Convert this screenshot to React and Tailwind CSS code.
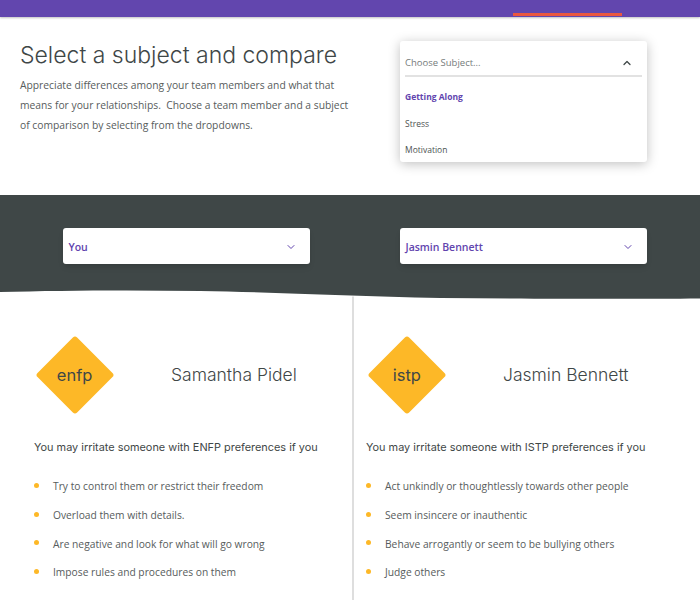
import { ChevronDown, ChevronUp } from "lucide-react";

const people = [
  {
    type: "enfp",
    name: "Samantha Pidel",
    intro: "You may irritate someone with ENFP preferences if you",
    items: [
      "Try to control them or restrict their freedom",
      "Overload them with details.",
      "Are negative and look for what will go wrong",
      "Impose rules and procedures on them",
    ],
  },
  {
    type: "istp",
    name: "Jasmin Bennett",
    intro: "You may irritate someone with ISTP preferences if you",
    items: [
      "Act unkindly or thoughtlessly towards other people",
      "Seem insincere or inauthentic",
      "Behave arrogantly or seem to be bullying others",
      "Judge others",
    ],
  },
];

function PersonSelect({ label }) {
  return (
    <div className="flex h-9 w-[247px] items-center justify-between rounded-[3px] bg-white pl-[5.5px] pr-[13px] shadow-md">
      <span className="pt-[3px] text-[10.5px] font-semibold text-[#6144ae]">{label}</span>
      <ChevronDown className="mt-[2px] h-3 w-3 text-[#6144ae]" strokeWidth={2} />
    </div>
  );
}

function PersonColumn({ person, className }) {
  return (
    <div className={className}>
      <div className="flex h-[80px] items-center">
        <div className="ml-px flex h-[80px] w-[80px] shrink-0 items-center justify-center">
          <div className="flex h-[56px] w-[56px] rotate-45 items-center justify-center rounded-[3px] bg-[#fdb827]">
            <span className="-rotate-45 font-['Inter',sans-serif] text-[16.5px] text-[#3f4747]">{person.type}</span>
          </div>
        </div>
        <div className="ml-[56px] pt-px font-['Inter',sans-serif] text-[17.5px] font-light text-[#3f4747]">{person.name}</div>
      </div>
      <p className="mt-[22px] font-['Inter',sans-serif] text-[10.9px] leading-[20px] text-[#3f4747]">{person.intro}</p>
      <ul className="mt-[20px] flex flex-col gap-[8.7px]">
        {person.items.map((item) => (
          <li key={item} className="flex h-5 items-center text-[10.25px] text-[#575c5c]">
            <span className="mb-[3px] mr-[14px] h-[5px] w-[5px] shrink-0 rounded-full bg-[#fdb827]" />
            {item}
          </li>
        ))}
      </ul>
    </div>
  );
}

export default function App() {
  return (
    <div className="h-[600px] w-[700px] overflow-hidden bg-white font-['Open_Sans',sans-serif]">
      {/* Nav */}
      <header className="flex h-[17px] justify-end bg-[#6246ae] pr-[78px] shadow-[0_1px_2px_rgba(0,0,0,0.25)]">
        <div className="mt-[13px] h-[3px] w-[109px] bg-[#e9573f]" />
      </header>

      {/* Intro */}
      <section className="flex h-[178px] justify-between pl-5 pr-[53px]">
        <div className="w-[340px] pt-[23px]">
          <h1 className="font-['Inter',sans-serif] text-[23px] font-light leading-[30px] text-[#3f4747]">
            Select a subject and compare
          </h1>
          <p className="mt-[6px] whitespace-pre-wrap text-[10.3px] leading-[19.8px] text-[#575c5c]">
            Appreciate differences among your team members and what that means for your relationships.  Choose a team member and a subject of comparison by selecting from the dropdowns.
          </p>
        </div>
        <div className="mt-6 h-[121px] w-[247px] rounded-[3px] bg-white px-[5px] shadow-[0_2px_12px_rgba(0,0,0,0.25)]">
          <div className="flex h-[36px] items-center justify-between border-b-2 border-[#e2e2e2] pr-[9px] pt-[10px] text-[9.5px] text-[#767b7b]">
            <span>Choose Subject...</span>
            <ChevronUp className="h-3 w-3 text-[#3f4747]" strokeWidth={2.5} />
          </div>
          <div className="flex h-[26px] items-center pt-[15px] text-[8.5px] font-bold text-[#6144ae]">Getting Along</div>
          <div className="flex h-[26px] items-center pt-[16px] text-[8.5px] text-[#4c5252]">Stress</div>
          <div className="flex h-[26px] items-center pt-[16px] text-[8.5px] text-[#4c5252]">Motivation</div>
        </div>
      </section>

      {/* Pickers */}
      <section className="relative h-[104px] bg-[#3f4747]">
        <div className="flex justify-between pl-[63px] pr-[53px] pt-[33px]">
          <PersonSelect label="You" />
          <PersonSelect label="Jasmin Bennett" />
        </div>
        <svg className="absolute bottom-0 left-0" width="700" height="14" viewBox="0 0 700 14">
          <path d="M0 7 C 60 5.5, 130 5, 200 6 C 270 7, 350 11, 440 13 C 540 14, 640 14, 700 13.5 L700 14 L0 14 Z" fill="#fff" />
          <rect x="352" y="11.5" width="2" height="2.5" fill="#dedede" />
        </svg>
      </section>

      {/* Comparison */}
      <section className="grid grid-cols-[352px_1fr]">
        <PersonColumn person={people[0]} className="pl-[34px] pt-[36px]" />
        <PersonColumn person={people[1]} className="h-[301px] border-l-2 border-[#dedede] pl-3 pt-[36px]" />
      </section>
    </div>
  );
}
